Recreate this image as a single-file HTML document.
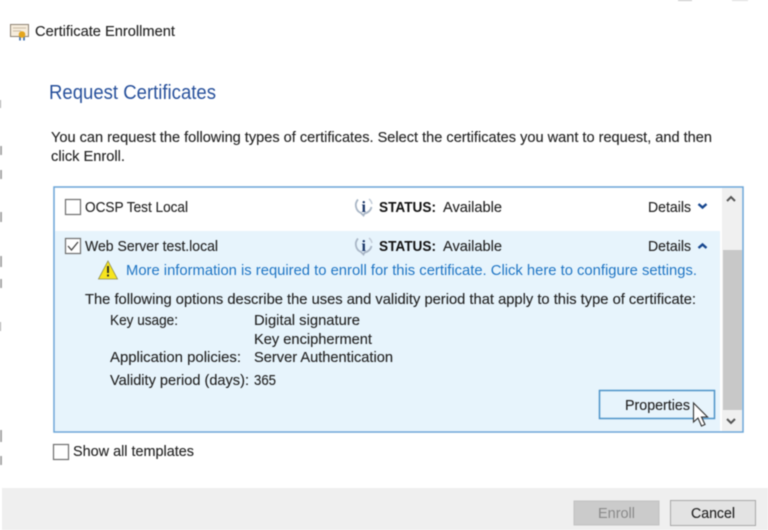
<!DOCTYPE html>
<html><head><meta charset="utf-8"><style>
html,body{margin:0;padding:0;background:#fff;width:768px;height:530px;overflow:hidden}
svg{display:block;filter:blur(.45px)}
text{font-family:"Liberation Sans",sans-serif;font-size:15px;fill:#222;stroke:#222;stroke-width:.12px}
</style></head><body>
<svg width="768" height="530" viewBox="0 0 768 530" xmlns="http://www.w3.org/2000/svg">
<rect width="768" height="530" fill="#fff"/>
<!-- top-edge and left-edge remnants -->
<rect x="678" y="0" width="14" height="1" fill="#c4c4c4"/>
<rect x="732" y="0" width="16" height="1" fill="#dcdcdc"/>
<path d="M0 100h1v8H0zM0 146h2v9H0zM0 170h2v9H0zM0 212h2v10H0zM0 256h2v11H0zM0 279h2v9H0zM0 322h1v9H0zM0 430h2v12H0zM0 456h2v9H0z" fill="#8a8a8a" opacity=".75"/>
<!-- title icon -->
<rect x="10.500" y="24.500" width="18" height="12" fill="#f6ecdc" stroke="#8d8172"/>
<path d="M13 28h13M13 31h8" stroke="#c9bba6" fill="none"/>
<path d="M20 37v3.500M24 37v3.500" stroke="#3f6ea8" stroke-width="1.700"/>
<circle cx="22" cy="34.500" r="3.300" fill="#e3a51d"/>
<text x="35" y="36" textLength="140" lengthAdjust="spacingAndGlyphs">Certificate Enrollment</text>
<text x="49" y="99" textLength="167" lengthAdjust="spacingAndGlyphs" style="font-size:20px;fill:#27509b;stroke:none">Request Certificates</text>
<text x="51" y="142" textLength="661" lengthAdjust="spacingAndGlyphs">You can request the following types of certificates. Select the certificates you want to request, and then</text>
<text x="51" y="161" textLength="74" lengthAdjust="spacingAndGlyphs">click Enroll.</text>
<!-- list -->
<rect x="54" y="187" width="689" height="245" fill="#fff" stroke="#6ba5d7" stroke-width="1.500"/>
<rect x="55" y="231" width="665" height="200" fill="#e7f4fc"/>
<rect x="722" y="188" width="20" height="243" fill="#f0f0f0"/>
<rect x="723" y="250" width="19" height="160" fill="#c8c8c8"/>
<path d="M727 201l4-4 4 4" fill="none" stroke="#555" stroke-width="2"/>
<path d="M727 419l4 4 4-4" fill="none" stroke="#555" stroke-width="2"/>
<!-- row 1 -->
<rect x="65.500" y="199.500" width="15" height="15" fill="#fff" stroke="#6d6d6d" stroke-width="1.200"/>
<text x="85" y="212" textLength="103" lengthAdjust="spacingAndGlyphs">OCSP Test Local</text>
<path d="M358 199.500a8.500 8.500 0 0 0 3 13.500l2.500 2.500 1-2a8.500 8.500 0 0 0 7-6.500" fill="none" stroke="#a9b6c6" stroke-width="1.800"/>
<path d="M369 199a8.500 8.500 0 0 1 3 5" fill="none" stroke="#c2ccd8" stroke-width="1.500"/>
<text x="361.500" y="212" style="font-family:'Liberation Serif',serif;font-weight:700;font-size:16px;fill:#1a3668;stroke:none">i</text>
<text x="379" y="212" textLength="57" lengthAdjust="spacingAndGlyphs" style="font-weight:700;fill:#111;stroke:none">STATUS:</text>
<text x="443" y="212" textLength="59" lengthAdjust="spacingAndGlyphs">Available</text>
<text x="648" y="212" textLength="43" lengthAdjust="spacingAndGlyphs">Details</text>
<path d="M698.500 204l4 3.500 4-3.500" fill="none" stroke="#17478f" stroke-width="2.400"/>
<!-- row 2 -->
<rect x="65.500" y="238.500" width="15" height="15" fill="#fff" stroke="#6d6d6d" stroke-width="1.200"/>
<path d="M68 246l3.500 4 6.500-8" fill="none" stroke="#444" stroke-width="1.300"/>
<text x="85" y="251" textLength="133" lengthAdjust="spacingAndGlyphs">Web Server test.local</text>
<path d="M358 238.500a8.500 8.500 0 0 0 3 13.500l2.500 2.500 1-2a8.500 8.500 0 0 0 7-6.500" fill="none" stroke="#a9b6c6" stroke-width="1.800"/>
<path d="M369 238a8.500 8.500 0 0 1 3 5" fill="none" stroke="#c2ccd8" stroke-width="1.500"/>
<text x="361.500" y="251" style="font-family:'Liberation Serif',serif;font-weight:700;font-size:16px;fill:#1a3668;stroke:none">i</text>
<text x="379" y="251" textLength="57" lengthAdjust="spacingAndGlyphs" style="font-weight:700;fill:#111;stroke:none">STATUS:</text>
<text x="443" y="251" textLength="59" lengthAdjust="spacingAndGlyphs">Available</text>
<text x="648" y="251" textLength="43" lengthAdjust="spacingAndGlyphs">Details</text>
<path d="M698.500 248l4-3.500 4 3.500" fill="none" stroke="#17478f" stroke-width="2.400"/>
<!-- warning -->
<path d="M108 261l9.500 18h-19z" fill="#f7e51e" stroke="#8a8a50" stroke-width=".8"/>
<path d="M108 266v7M108 274.500v2" stroke="#222" stroke-width="1.800"/>
<text x="126" y="275" textLength="571" lengthAdjust="spacingAndGlyphs" style="fill:#1f75c4;stroke:none">More information is required to enroll for this certificate. Click here to configure settings.</text>
<text x="85" y="304" textLength="611" lengthAdjust="spacingAndGlyphs">The following options describe the uses and validity period that apply to this type of certificate:</text>
<text x="110" y="325" textLength="68" lengthAdjust="spacingAndGlyphs">Key usage:</text>
<text x="254" y="325" textLength="106" lengthAdjust="spacingAndGlyphs">Digital signature</text>
<text x="254" y="344" textLength="118" lengthAdjust="spacingAndGlyphs">Key encipherment</text>
<text x="110" y="362" textLength="131" lengthAdjust="spacingAndGlyphs">Application policies:</text>
<text x="254" y="362" textLength="139" lengthAdjust="spacingAndGlyphs">Server Authentication</text>
<text x="110" y="385" textLength="139" lengthAdjust="spacingAndGlyphs">Validity period (days):</text>
<text x="254" y="385" textLength="22" lengthAdjust="spacingAndGlyphs">365</text>
<!-- properties -->
<rect x="599.500" y="390.500" width="115" height="28" fill="#e7f4fc" stroke="#4d93c8" stroke-width="1.500"/>
<text x="625" y="410" textLength="65" lengthAdjust="spacingAndGlyphs">Properties</text>
<path d="M693.500 403v19l4.500-4 3.500 8 3.500-1.500-3.500-7.500h6z" fill="#fff" stroke="#333" stroke-width="1.100"/>
<!-- show all -->
<rect x="53.500" y="444.500" width="15" height="15" fill="#fff" stroke="#6d6d6d" stroke-width="1.200"/>
<text x="73" y="456" textLength="121" lengthAdjust="spacingAndGlyphs">Show all templates</text>
<!-- footer -->
<rect x="2" y="488" width="766" height="42" fill="#efefef"/>
<rect x="574" y="501" width="85" height="24" fill="#cbcbcb" stroke="#c2c2c2"/>
<text x="598" y="518" textLength="37" lengthAdjust="spacingAndGlyphs" style="fill:#8a8a8a;stroke:none">Enroll</text>
<rect x="670.500" y="500.500" width="85" height="25" fill="#e3e3e3" stroke="#a8a8a8"/>
<text x="691" y="518" textLength="44" lengthAdjust="spacingAndGlyphs">Cancel</text>
</svg>
</body></html>
